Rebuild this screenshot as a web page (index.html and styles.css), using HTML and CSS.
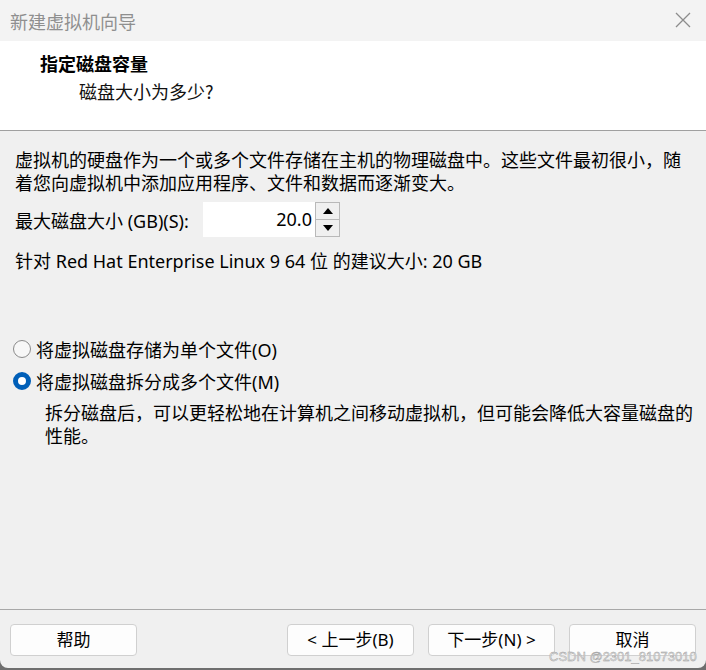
FILE: index.html
```html
<!DOCTYPE html>
<html lang="zh-CN">
<head>
<meta charset="utf-8">
<title>新建虚拟机向导</title>
<link rel="stylesheet" href="styles.css">
</head>
<body>
<div class="dialog">
  <div class="titlebar">
    <span class="title">新建虚拟机向导</span>
    <svg class="close" width="16" height="16" viewBox="0 0 16 16"><path d="M1 1L15 15M15 1L1 15" stroke="#8c8c8c" stroke-width="1.3" fill="none"/></svg>
  </div>
  <div class="header">
    <div class="h-title">指定磁盘容量</div>
    <div class="h-sub">磁盘大小为多少?</div>
  </div>
  <div class="content">
    <p class="intro"><span class="line">虚拟机的硬盘作为一个或多个文件存储在主机的物理磁盘中。这些文件最初很小，随</span><span class="line">着您向虚拟机中添加应用程序、文件和数据而逐渐变大。</span></p>
    <div class="size-row">
      <span class="label">最大磁盘大小 (GB)(S):</span>
      <div class="spin">
        <div class="spin-input">20.0</div>
        <div class="spin-btns">
          <div class="spin-btn"><svg width="10" height="6" viewBox="0 0 10 6"><path d="M5 0L10 6H0Z" fill="#000"/></svg></div>
          <div class="spin-btn"><svg width="10" height="6" viewBox="0 0 10 6"><path d="M0 0H10L5 6Z" fill="#000"/></svg></div>
        </div>
      </div>
    </div>
    <p class="recommend">针对 Red Hat Enterprise Linux 9 64 位 的建议大小: 20 GB</p>
    <div class="options">
      <div class="radio-row"><span class="radio"></span><span>将虚拟磁盘存储为单个文件(O)</span></div>
      <div class="radio-row"><span class="radio checked"></span><span>将虚拟磁盘拆分成多个文件(M)</span></div>
      <p class="desc"><span class="line">拆分磁盘后，可以更轻松地在计算机之间移动虚拟机，但可能会降低大容量磁盘的</span><span class="line">性能。</span></p>
    </div>
  </div>
  <div class="footer">
    <button class="btn">帮助</button>
    <div class="spacer"></div>
    <button class="btn">&lt; 上一步(B)</button>
    <button class="btn">下一步(N) &gt;</button>
    <button class="btn">取消</button>
  </div>
  <div class="watermark">CSDN @2301_81073010</div>
</div>
</body>
</html>
```

FILE: styles.css
```css
* { box-sizing: border-box; }
html, body { margin: 0; padding: 0; }
body {
  width: 706px;
  height: 670px;
  background: #6e6e6e;
  font-family: "Noto Sans", "Noto Sans CJK SC", sans-serif;
  font-size: 18px;
  color: #000;
  overflow: hidden;
}
.dialog {
  position: relative;
  width: 706px;
  height: 668px;
  background: #f0f0f0;
  display: flex;
  flex-direction: column;
  border-radius: 0 0 8px 8px;
  overflow: hidden;
}
.titlebar {
  height: 41px;
  flex: none;
  background: #f3f3f3;
  display: flex;
  align-items: center;
  justify-content: space-between;
  padding: 0 15px 0 10px;
}
.title {
  font-family: "Noto Sans CJK SC", sans-serif;
  color: #8f8f8f;
  font-size: 18px;
  line-height: 24px;
}
.close { display: block; margin-top: -2px; }
.header {
  height: 90px;
  flex: none;
  background: #fff;
  border-bottom: 1px solid #a0a0a0;
  padding: 10px 0 0 40px;
}
.h-title {
  font-family: "Noto Sans CJK SC", sans-serif;
  font-weight: bold;
  font-size: 18px;
  line-height: 24px;
}
.h-sub {
  font-family: "Noto Sans CJK SC", sans-serif;
  font-size: 18px;
  line-height: 24px;
  margin: 4px 0 0 39px;
  color: #111;
}
.content {
  flex: 1;
  padding: 18px 0 0 15px;
}
p { margin: 0; }
.line { display: block; white-space: nowrap; }
.intro { line-height: 23px; }
.size-row {
  display: flex;
  align-items: center;
  margin-top: 7px;
  height: 35px;
}
.label { width: 188px; white-space: nowrap; }
.spin {
  display: flex;
  height: 35px;
}
.spin-input {
  width: 112px;
  background: #fff;
  text-align: right;
  padding-right: 3px;
  line-height: 35px;
}
.spin-btns {
  width: 25px;
  border: 1px solid #b9b9b9;
  display: flex;
  flex-direction: column;
}
.spin-btn {
  flex: 1;
  background: #f0f0f0;
  display: flex;
  align-items: center;
  justify-content: center;
}
.spin-btn + .spin-btn { border-top: 1px solid #b9b9b9; }
.recommend {
  margin-top: 12px;
  line-height: 24px;
}
.options { margin-top: 64px; }
.radio-row {
  display: flex;
  align-items: center;
  height: 24px;
  margin-left: -2px;
  margin-bottom: 8px;
}
.radio {
  width: 18px;
  height: 18px;
  border-radius: 50%;
  border: 1px solid #8a8a8a;
  background: #f7f7f7;
  margin-right: 5px;
  flex: none;
}
.radio.checked {
  border: 5.5px solid #005fb8;
  background: #fff;
}
.desc {
  margin: 0 0 0 30px;
  line-height: 23px;
  padding-top: 1px;
}
.footer {
  flex: none;
  height: 59px;
  border-top: 1px solid #a8a8a8;
  display: flex;
  align-items: flex-start;
  padding: 14px 10px 0 10px;
  gap: 14px;
}
.spacer { flex: 1; }
.btn {
  width: 127px;
  height: 32px;
  border: 1px solid #d0d0d0;
  border-radius: 4px;
  background: #fdfdfd;
  font-family: "Noto Sans", "Noto Sans CJK SC", sans-serif;
  font-size: 17px;
  line-height: 20px;
  color: #000;
  padding: 0;
}
.watermark {
  position: absolute;
  left: 549px;
  top: 652px;
  font-family: "Liberation Sans", sans-serif;
  font-size: 13px;
  line-height: 10px;
  color: #e4e4e4;
  -webkit-text-stroke: 0.4px #9a9a9a;
}
```
